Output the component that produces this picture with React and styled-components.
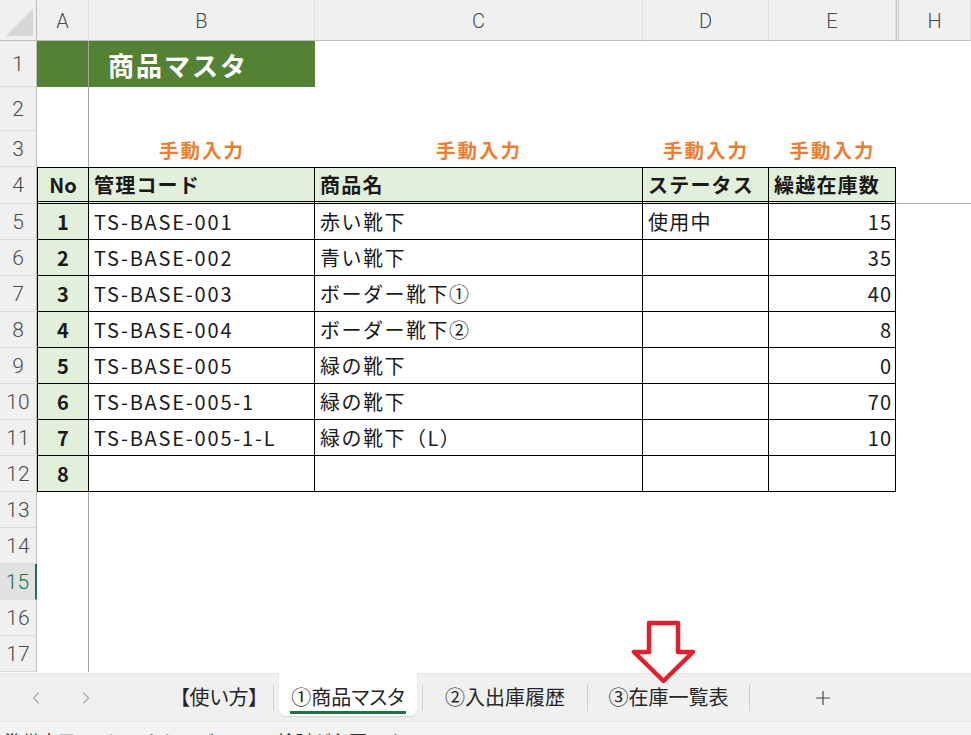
import React from 'react'
import styled, { createGlobalStyle } from 'styled-components'
import { ChevronLeft, ChevronRight, Plus, PersonStanding } from 'lucide-react'

const JP = `"Noto Sans CJK JP", "Noto Sans", sans-serif`
const HEAD = `Roboto, "Noto Sans", "Noto Sans CJK JP", sans-serif`

const GlobalStyle = createGlobalStyle`
  html, body { margin: 0; padding: 0; }
  body {
    width: 971px;
    height: 735px;
    overflow: hidden;
    background: #fff;
    font-family: ${JP};
  }
  * { box-sizing: border-box; }
`

const Window = styled.div`
  position: relative;
  width: 971px;
  height: 735px;
  display: flex;
  flex-direction: column;
  overflow: hidden;
`

const Sheet = styled.div`
  flex: none;
  height: 673px;
  display: grid;
  grid-template-columns: 37px 52px 226px 328px 126px 127px 3px 1fr;
  grid-template-rows: 41px 46px 44px 36px 37px repeat(13, 36px);
  overflow: hidden;
`

const Corner = styled.div`
  background: #f0f0f0;
  border-right: 1px solid #bdbdbd;
  border-bottom: 1px solid #bdbdbd;
  display: flex;
  align-items: flex-end;
  justify-content: flex-end;
  padding: 0 3px 4px 0;
`

const CornerMark = styled.div`
  width: 27px;
  height: 27px;
  background: #d6d6d6;
  clip-path: polygon(100% 0, 100% 100%, 0 100%);
`

const ColHead = styled.div`
  background: #f0f0f0;
  border-bottom: 1px solid #bdbdbd;
  border-right: 1px solid ${p => (p.$hidden ? '#c8c8c8' : '#dcdcdc')};
  border-left: ${p => (p.$hidden ? '1px solid #c8c8c8' : 'none')};
  display: flex;
  align-items: center;
  justify-content: center;
  font-family: ${HEAD};
  font-weight: 300;
  font-size: 20px;
  color: #4a4a4a;
  padding-top: 2px;
`

const RowHead = styled.div`
  background: ${p => (p.$selected ? '#e1e1e1' : '#f0f0f0')};
  border-bottom: 1px solid #dcdcdc;
  border-right: ${p => (p.$selected ? '2px solid #217346' : '1px solid #bdbdbd')};
  display: flex;
  align-items: center;
  justify-content: center;
  font-family: ${HEAD};
  font-weight: 300;
  font-size: 21px;
  color: ${p => (p.$selected ? '#217346' : '#4a4a4a')};
`

const Cell = styled.div`
  display: flex;
  align-items: center;
  justify-content: ${p => p.$align || 'flex-start'};
  padding: ${p => (p.$align === 'flex-end' ? '0 3px 0 0' : p.$align === 'center' ? '0' : '0 0 0 5px')};
  background: ${p => p.$fill || 'transparent'};
  font-family: ${JP};
  font-size: ${p => p.$size || 20}px;
  font-weight: ${p => (p.$bold ? 700 : 400)};
  letter-spacing: ${p => p.$spacing || 0}px;
  color: ${p => p.$color || '#1a1a1a'};
  white-space: nowrap;
  overflow: hidden;
  border-right: ${p => (p.$table ? '1px solid #000' : p.$freeze ? '1px solid #a6a6a6' : 'none')};
  border-bottom: ${p =>
    p.$double ? '3px double #000' : p.$table ? '1px solid #000' : p.$freezeBottom ? '1px solid #a6a6a6' : 'none'};
  border-top: ${p => (p.$top ? '1px solid #000' : 'none')};
  border-left: ${p => (p.$left ? '1px solid #000' : 'none')};
`

const Title = styled(Cell)`
  padding-left: 19px;
  font-size: 26px;
  font-weight: 700;
  color: #fff;
  letter-spacing: 2px;
`

const TabBar = styled.div`
  flex: none;
  height: 48px;
  background: #f0f0f0;
  border-top: 1px solid #e2e2e2;
  display: flex;
  align-items: stretch;
`

const Nav = styled.div`
  width: 165px;
  flex: none;
  display: flex;
  align-items: center;
  gap: 30px;
  padding-left: 26px;
  color: #a9a9a9;
`

const Tab = styled.div`
  width: ${p => p.$w}px;
  flex: none;
  display: flex;
  align-items: center;
  justify-content: center;
  font-family: ${JP};
  font-feature-settings: "palt";
  font-size: 20px;
  color: #262626;
  background: ${p => (p.$active ? '#fff' : 'transparent')};
  border-radius: ${p => (p.$active ? '0 0 7px 7px' : '0')};
  margin: ${p => (p.$active ? '-1px 5px 5px' : '0')};
  box-shadow: ${p => (p.$active ? '0 1px 2px rgba(0,0,0,0.12)' : 'none')};
`

const TabLabel = styled.span`
  padding: 3px 1px 2px;
  border-bottom: 3px solid ${p => (p.$active ? '#217346' : 'transparent')};
  line-height: 1.2;
  margin-top: ${p => (p.$active ? '6px' : '0')};
`

const Sep = styled.div`
  width: 1px;
  flex: none;
  align-self: center;
  height: 27px;
  background: #cdcdcd;
`

const AddSheet = styled.div`
  margin-left: 62px;
  display: flex;
  align-items: center;
  color: #444;
`

const StatusBar = styled.div`
  flex: 1;
  background: #f3f3f3;
  border-top: 1px solid #e6e6e6;
  display: flex;
  align-items: flex-start;
  gap: 26px;
  padding: 6px 0 0 4px;
  font-family: ${JP};
  font-size: 18px;
  color: #333;
`

const StatusItem = styled.span`
  display: flex;
  align-items: center;
  gap: 6px;
`

const Callout = styled.svg`
  position: absolute;
  left: 631px;
  top: 620px;
  pointer-events: none;
`

const items = [
  { no: 1, code: 'TS-BASE-001', name: '赤い靴下', status: '使用中', qty: 15 },
  { no: 2, code: 'TS-BASE-002', name: '青い靴下', qty: 35 },
  { no: 3, code: 'TS-BASE-003', name: 'ボーダー靴下①', qty: 40 },
  { no: 4, code: 'TS-BASE-004', name: 'ボーダー靴下②', qty: 8 },
  { no: 5, code: 'TS-BASE-005', name: '緑の靴下', qty: 0 },
  { no: 6, code: 'TS-BASE-005-1', name: '緑の靴下', qty: 70 },
  { no: 7, code: 'TS-BASE-005-1-L', name: '緑の靴下（L）', qty: 10 },
  { no: 8 },
]

const GREEN = '#548235'
const PALE = '#e2efda'
const ORANGE = '#ed7d31'

const Blank = ({ n, children }) => (
  <>
    <RowHead $selected={n === 15}>{n}</RowHead>
    {children}
  </>
)

const App = () => {
  return (
    <Window>
      <GlobalStyle />
      <Sheet>
        <Corner><CornerMark /></Corner>
        {['A', 'B', 'C', 'D', 'E'].map(c => <ColHead key={c}>{c}</ColHead>)}
        <ColHead $hidden />
        <ColHead>H</ColHead>

        <Blank n={1}>
          <Cell $fill={GREEN} $freeze />
          <Title $fill={GREEN}>商品マスタ</Title>
          <Cell /><Cell /><Cell /><Cell /><Cell />
        </Blank>

        <Blank n={2}>
          <Cell $freeze /><Cell /><Cell /><Cell /><Cell /><Cell /><Cell />
        </Blank>

        <Blank n={3}>
          <Cell $freeze />
          {[0, 1, 2, 3].map(i => (
            <Cell key={i} $align="center" $bold $size={19.5} $spacing={2} $color={ORANGE}>手動入力</Cell>
          ))}
          <Cell /><Cell />
        </Blank>

        <Blank n={4}>
          <Cell $table $top $left $double $fill={PALE} $bold $align="center">No</Cell>
          {['管理コード', '商品名', 'ステータス', '繰越在庫数'].map(h => (
            <Cell key={h} $table $top $double $fill={PALE} $bold $spacing={1.2}>{h}</Cell>
          ))}
          <Cell $freezeBottom /><Cell $freezeBottom />
        </Blank>

        {items.map((it, i) => (
          <Blank key={it.no} n={5 + i}>
            <Cell $table $left $fill={PALE} $bold $align="center">{it.no}</Cell>
            <Cell $table $spacing={1.8}>{it.code}</Cell>
            <Cell $table $spacing={1.5}>{it.name}</Cell>
            <Cell $table $spacing={1.2}>{it.status}</Cell>
            <Cell $table $align="flex-end" $spacing={1}>{it.qty}</Cell>
            <Cell /><Cell />
          </Blank>
        ))}

        {[13, 14, 15, 16, 17].map(n => (
          <Blank key={n} n={n}>
            <Cell $freeze /><Cell /><Cell /><Cell /><Cell /><Cell /><Cell />
          </Blank>
        ))}
      </Sheet>

      <TabBar>
        <Nav>
          <ChevronLeft size={20} strokeWidth={1.4} />
          <ChevronRight size={20} strokeWidth={1.4} />
        </Nav>
        <Tab $w={108}><TabLabel>【使い方】</TabLabel></Tab>
        <Sep />
        <Tab $w={138} $active><TabLabel $active>①商品マスタ</TabLabel></Tab>
        <Sep />
        <Tab $w={164}><TabLabel>②入出庫履歴</TabLabel></Tab>
        <Sep />
        <Tab $w={161}><TabLabel>③在庫一覧表</TabLabel></Tab>
        <Sep />
        <AddSheet><Plus size={22} strokeWidth={1.3} /></AddSheet>
      </TabBar>

      <StatusBar>
        <StatusItem>準備完了</StatusItem>
        <StatusItem>
          <PersonStanding size={18} strokeWidth={1.6} />
          アクセシビリティ: 検討が必要です
        </StatusItem>
      </StatusBar>

      <Callout width="66" height="66" viewBox="0 0 66 66">
        <path
          d="M18 3 H47 V32 H62 L32.5 61 L3 32 H18 Z"
          fill="none"
          stroke="#e0202b"
          strokeWidth="4.5"
          strokeLinejoin="round"
        />
      </Callout>
    </Window>
  )
}

export default App
